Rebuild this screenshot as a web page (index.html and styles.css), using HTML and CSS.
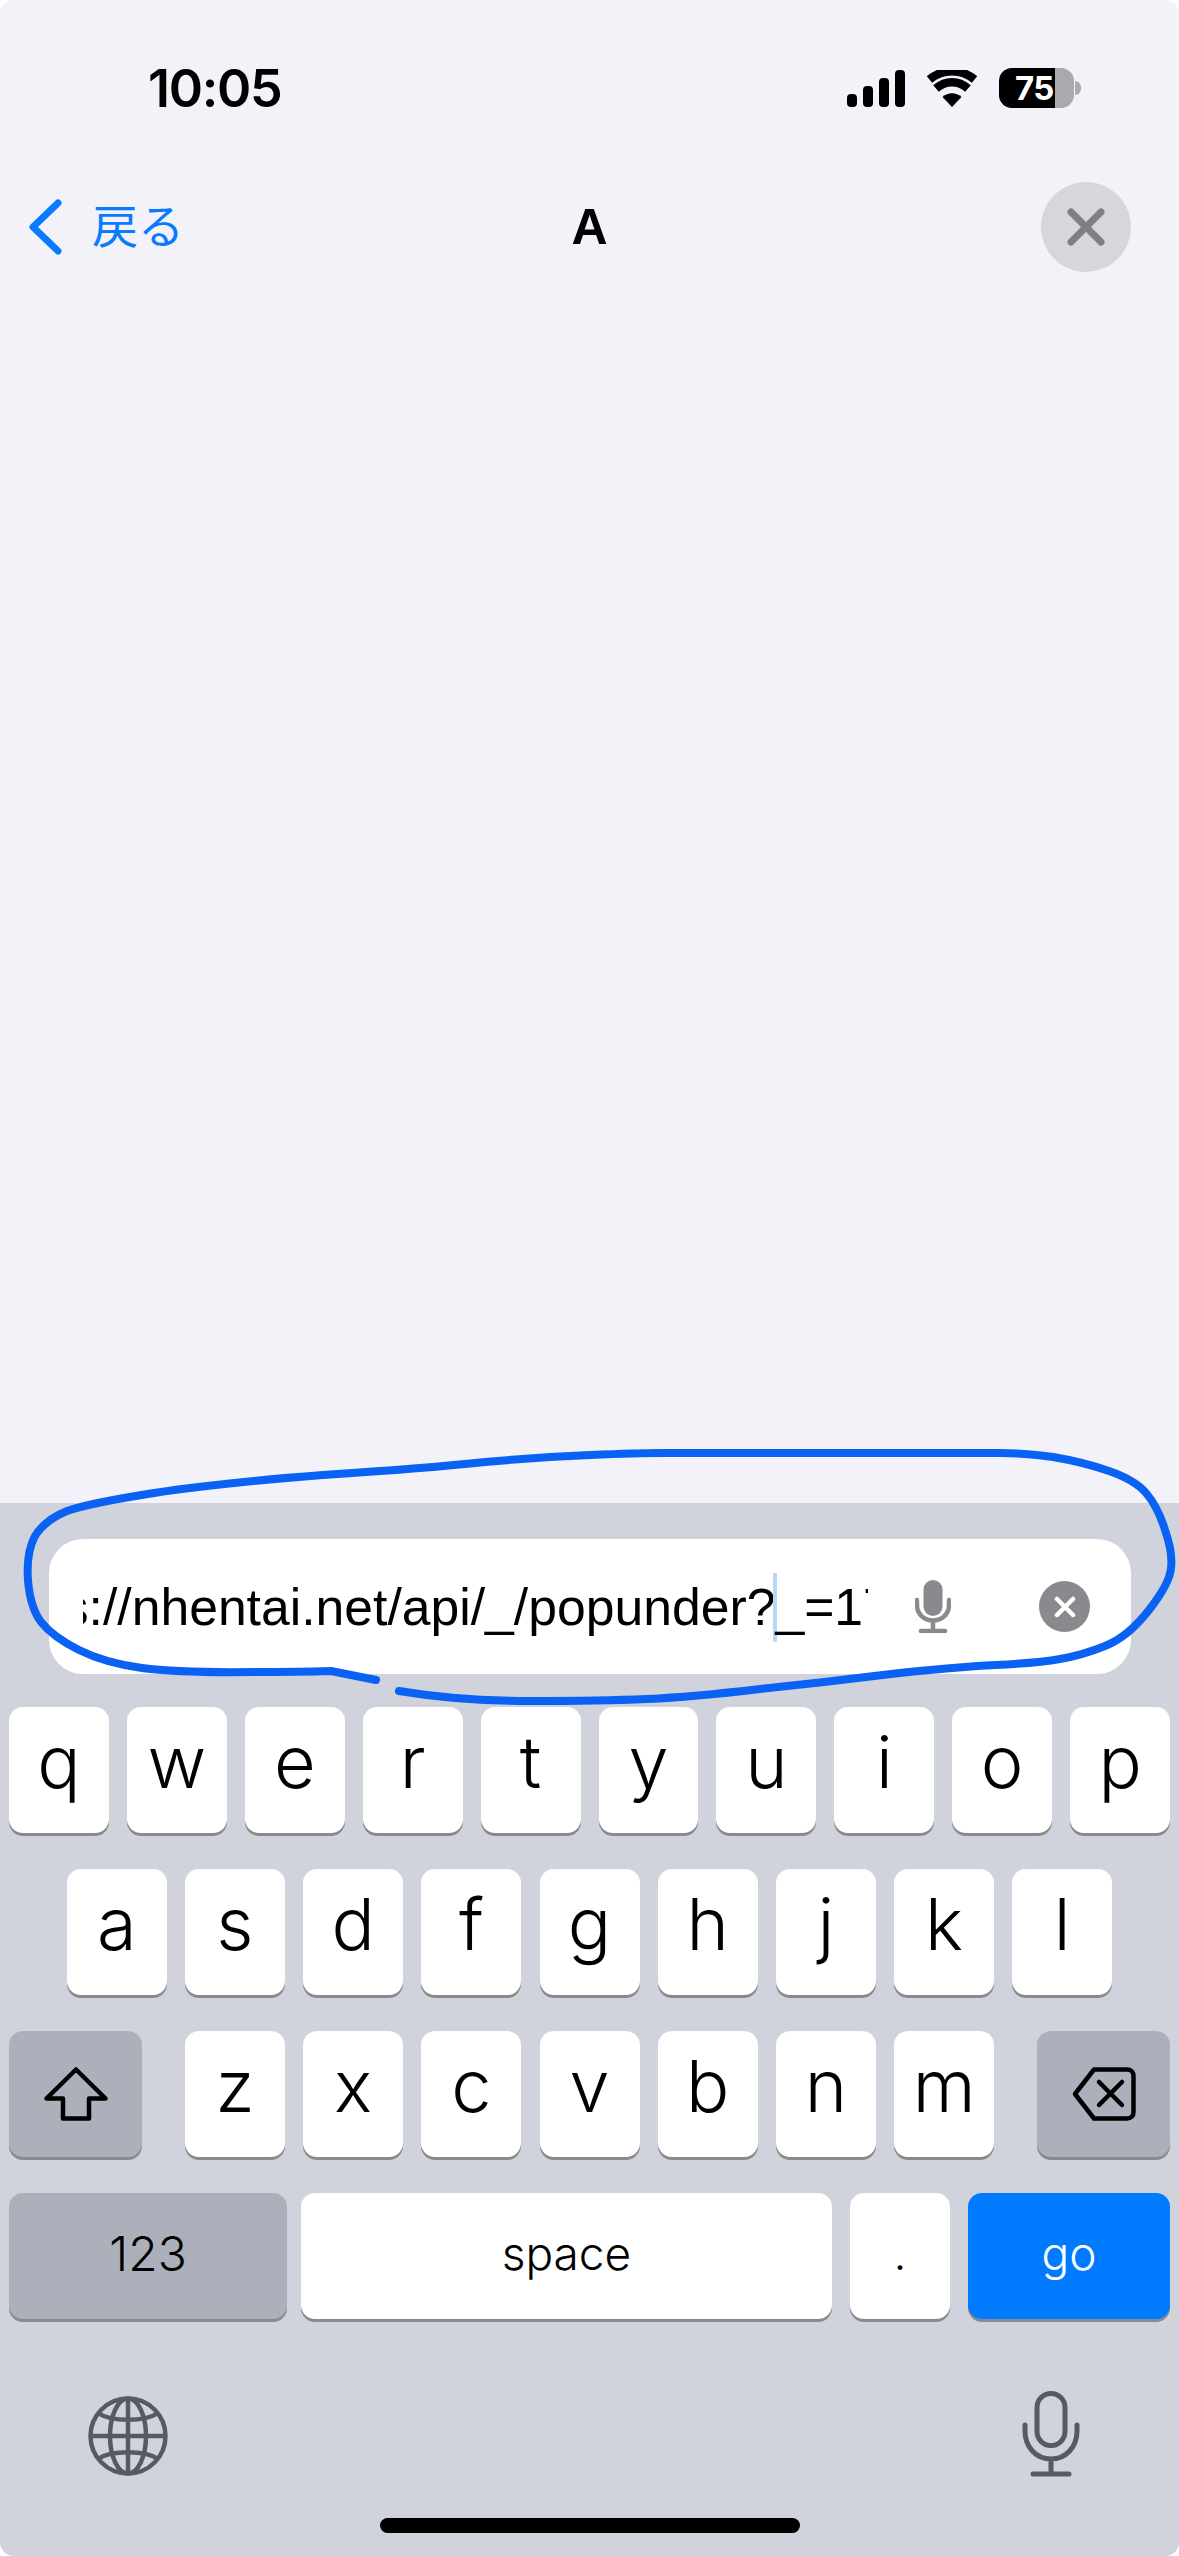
FILE: index.html
```html
<!DOCTYPE html>
<html lang="ja">
<head>
<meta charset="utf-8">
<title>A</title>
<link rel="stylesheet" href="styles.css">
</head>
<body>
<div class="screen">
  <header class="status">
    <span class="time">10:05</span>
    <div class="status-icons">
      <svg class="signal" viewBox="0 0 58 37"><rect x="0" y="24" width="10" height="13" rx="4"/><rect x="16" y="16" width="10" height="21" rx="4"/><rect x="32" y="8" width="10" height="29" rx="4"/><rect x="48" y="0" width="10" height="37" rx="4"/></svg>
      <svg class="wifi" viewBox="0 0 50 37"><path d="M25 37 15.500 27C21 22 29 22 34.500 27Z"/><path class="arc" d="M9 18.500C18.500 10 31.500 10 41 18.500"/><path class="arc" d="M2.500 9.500C16 -1.500 34 -1.500 47.500 9.500"/></svg>
      <div class="battery"><span class="battery-level">75</span></div>
    </div>
  </header>
  <nav class="nav">
    <div class="back">
      <svg class="chevron" viewBox="0 0 34 56"><path d="M30 4 5 28 30 52"/></svg>
      <span class="back-label">戻る</span>
    </div>
    <div class="title">A</div>
    <div class="close">
      <svg viewBox="0 0 38 38"><path d="M4 4 34 34M34 4 4 34"/></svg>
    </div>
  </nav>
  <main class="content"></main>
  <section class="keyboard">
    <div class="field">
      <div class="url"><span class="url-text">https://nhentai.net/api/_/popunder?<span class="caret"></span>_=1700000000</span></div>
      <svg class="field-mic" viewBox="0 0 36 53"><rect x="8.500" y="0" width="19" height="36" rx="9.500" class="solid"/><path d="M2 20V25C2 34 9 40.500 18 40.500S34 34 34 25V20M18 40.500V51M6 51H30"/></svg>
      <div class="clear"><svg viewBox="0 0 22 22"><path d="M3 3 19 19M19 3 3 19"/></svg></div>
    </div>
    <div class="row">
      <div class="key">q</div><div class="key">w</div><div class="key">e</div><div class="key">r</div><div class="key">t</div><div class="key">y</div><div class="key">u</div><div class="key">i</div><div class="key">o</div><div class="key">p</div>
    </div>
    <div class="row row-home">
      <div class="key">a</div><div class="key">s</div><div class="key">d</div><div class="key">f</div><div class="key">g</div><div class="key">h</div><div class="key">j</div><div class="key">k</div><div class="key">l</div>
    </div>
    <div class="row row-shift">
      <div class="key key-fn key-mod">
        <svg class="shift" viewBox="0 0 64 54"><path d="M32 2.500 2.500 31.500H19V51.500H45V31.500H61.500Z"/></svg>
      </div>
      <div class="letters">
        <div class="key">z</div><div class="key">x</div><div class="key">c</div><div class="key">v</div><div class="key">b</div><div class="key">n</div><div class="key">m</div>
      </div>
      <div class="key key-fn key-mod">
        <svg class="delete" viewBox="0 0 64 54"><path d="M22 2.500H55C59 2.500 61.500 5 61.500 9V45C61.500 49 59 51.500 55 51.500H22L3 27ZM27 15 50 38M50 15 27 38"/></svg>
      </div>
    </div>
    <div class="row row-bottom">
      <div class="key key-fn key-num">123</div>
      <div class="key key-space">space</div>
      <div class="key key-dot">.</div>
      <div class="key key-go">go</div>
    </div>
    <div class="system-row">
      <svg class="globe" viewBox="0 0 84 84"><circle cx="42" cy="42" r="37.500"/><ellipse cx="42" cy="42" rx="18" ry="37.500"/><path d="M42 4.500V79.500M4.500 42H79.500M12 19C25 28 59 28 72 19M12 65C25 56 59 56 72 65"/></svg>
      <svg class="mic" viewBox="0 0 58 86"><rect x="15" y="2.500" width="28" height="52" rx="14"/><path d="M3 34V40C3 56 14 68 29 68S55 56 55 40V34M29 68V83M11 83H47"/></svg>
    </div>
    <div class="home-bar"></div>
  </section>
  <svg class="scribble" viewBox="0 0 1179 2556"><path d="M376 1680 331 1671Q300 1672 255 1672Q180 1673 142 1668Q105 1663 79 1650Q53 1637 41 1622Q30 1607 28 1580Q26 1553 35 1536Q45 1520 67 1511Q90 1503 154 1493Q218 1483 323 1475Q429 1468 485 1462Q541 1457 590 1455Q639 1453 660 1453L1000 1453Q1023 1453 1053 1457Q1083 1462 1109 1471Q1135 1480 1146 1493Q1158 1507 1165 1530Q1173 1553 1171 1568Q1170 1583 1149 1610Q1128 1637 1105 1646Q1083 1655 1060 1659Q1038 1663 996 1665Q955 1667 891 1674Q827 1682 760 1689Q692 1697 647 1699Q602 1701 530 1701Q459 1701 399 1691"/></svg>
</div>
</body>
</html>
```

FILE: styles.css
```css
* { box-sizing: border-box; }
html, body { margin: 0; padding: 0; background: #fff; }
.screen {
  position: relative;
  width: 1179px;
  height: 2556px;
  display: flex;
  flex-direction: column;
  overflow: hidden;
  border-radius: 14px;
  background: #f2f2f8;
  font-family: Inter, "Liberation Sans", sans-serif;
  color: #000;
}

/* status bar */
.status {
  height: 176px;
  flex: none;
  display: flex;
  align-items: center;
  justify-content: space-between;
  padding: 0 98px 0 148px;
}
.time { font-size: 52px; font-weight: 600; letter-spacing: -1.300px; }
.status-icons { display: flex; align-items: center; gap: 22px; }
.signal { width: 58px; height: 37px; display: block; }
.wifi { width: 50px; height: 37px; display: block; }
.wifi .arc { fill: none; stroke: #000; stroke-width: 8.500; }
.battery {
  position: relative;
  width: 75px;
  height: 40px;
  margin-right: 7px;
  border-radius: 13px;
  background: linear-gradient(90deg, #000 75%, #a9a9ae 75%);
  display: flex;
  align-items: center;
  padding-left: 16px;
}
.battery::after {
  content: "";
  position: absolute;
  right: -7px;
  top: 13px;
  width: 6px;
  height: 14px;
  border-radius: 0 7px 7px 0;
  background: #a9a9ae;
}
.battery-level { color: #fff; font-size: 33px; font-weight: 700; letter-spacing: -0.5px; }

/* navigation */
.nav {
  flex: none;
  height: 90px;
  margin-top: 6px;
  display: grid;
  grid-template-columns: 1fr auto 1fr;
  align-items: center;
  padding: 0 48px;
}
.back { display: flex; align-items: center; gap: 30px; margin-left: -20px; color: #0a7aff; }
.chevron { width: 34px; height: 56px; display: block; }
.chevron path { fill: none; stroke: #0a7aff; stroke-width: 7; stroke-linecap: round; stroke-linejoin: round; }
.back-label { font-family: "Noto Sans CJK JP", sans-serif; font-size: 46px; line-height: 1; padding-bottom: 8px; }
.title { font-family: "Liberation Sans", sans-serif; font-size: 50px; font-weight: 700; }
.close {
  justify-self: end;
  width: 90px;
  height: 90px;
  border-radius: 50%;
  background: #d6d6db;
  display: flex;
  align-items: center;
  justify-content: center;
}
.close svg { width: 38px; height: 38px; display: block; }
.close path { fill: none; stroke: #7f7f83; stroke-width: 7; stroke-linecap: round; }
.content { flex: 1; }

/* keyboard */
.keyboard {
  flex: none;
  height: 1053px;
  background: #d0d3db;
  padding: 36px 9px 0;
}
.field {
  height: 135px;
  margin: 0 39px 33px 40px;
  border-radius: 34px;
  background: #fff;
  display: flex;
  align-items: center;
  padding-left: 34px;
}
.url { width: 785px; overflow: hidden; flex: none; }
.url-text {
  display: block;
  white-space: nowrap;
  margin-left: -106.500px;
  font-family: "Liberation Sans", sans-serif;
  font-size: 51.700px;
  line-height: 70px;
}
.caret {
  display: inline-block;
  width: 4px;
  height: 69px;
  margin: 0 -2px;
  vertical-align: -17px;
  background: #b7d7fb;
}
.field-mic { width: 36px; height: 53px; margin-left: 47px; flex: none; }
.field-mic path { fill: none; stroke: #8a8a8e; stroke-width: 4.500; stroke-linecap: round; }
.field-mic .solid { fill: #8a8a8e; }
.clear {
  width: 51px;
  height: 51px;
  margin-left: 88px;
  flex: none;
  border-radius: 50%;
  background: #8a8a8e;
  display: flex;
  align-items: center;
  justify-content: center;
}
.clear svg { width: 22px; height: 22px; display: block; }
.clear path { fill: none; stroke: #fff; stroke-width: 4.500; stroke-linecap: round; }

.row { display: flex; gap: 18px; margin-bottom: 36px; }
.row-home { justify-content: center; gap: 18.200px; }
.row-shift { justify-content: space-between; gap: 0; }
.letters { display: flex; gap: 18.200px; }
.key {
  flex: 1;
  height: 126px;
  border-radius: 14px;
  background: #fff;
  box-shadow: 0 3px 0 #898a8e;
  display: flex;
  align-items: center;
  justify-content: center;
  padding-bottom: 16px;
  font-family: Inter, "Liberation Sans", sans-serif;
  font-weight: 350;
  font-size: 72px;
  line-height: 1;
}
.row-home .key, .letters .key { flex: none; width: 100px; }
.key-fn { background: #abb0bb; }
.key-mod { flex: none; width: 133px; padding-bottom: 0; }
.key-num { flex: none; width: 278px; margin-right: -4px; }
.key-space { flex: none; width: 531px; }
.key-dot { flex: none; width: 100px; }
.key-go { flex: none; width: 202px; background: #007aff; color: #fff; }
.key-num, .key-space, .key-dot, .key-go { font-size: 46px; padding-bottom: 6px; }
.key-num { font-size: 48px; padding-bottom: 4px; }
.shift, .delete { width: 64px; height: 54px; display: block; }
.shift path, .delete path { fill: none; stroke: #000; stroke-width: 4.500; stroke-linejoin: round; stroke-linecap: round; }

.system-row {
  display: flex;
  justify-content: space-between;
  align-items: flex-start;
  padding: 36px 90px 0 77px;
}
.globe { width: 84px; height: 84px; margin-top: 3px; display: block; }
.globe circle, .globe ellipse, .globe path { fill: none; stroke: #575a63; stroke-width: 4.500; }
.mic { width: 58px; height: 86px; display: block; }
.mic rect, .mic path { fill: none; stroke: #575a63; stroke-width: 5; stroke-linecap: round; }
.home-bar {
  width: 420px;
  height: 15px;
  margin: 40px auto 0;
  border-radius: 8px;
  background: #000;
}

/* hand-drawn annotation lying over the page */
.scribble {
  position: absolute;
  inset: 0;
  width: 1179px;
  height: 2556px;
  pointer-events: none;
}
.scribble path { fill: none; stroke: #0a62f5; stroke-width: 8; stroke-linecap: round; stroke-linejoin: round; }
```
